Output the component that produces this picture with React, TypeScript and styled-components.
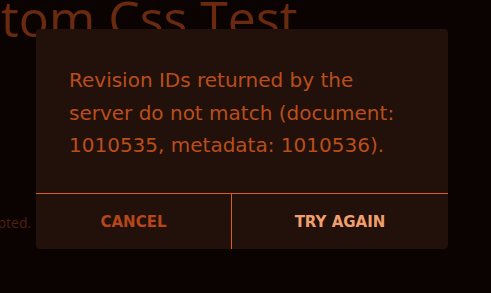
import React from "react";
import styled, { createGlobalStyle } from "styled-components";

const Global = createGlobalStyle`
  html, body { margin: 0; padding: 0; background: #0b0302; }
  body { width: 491px; height: 293px; overflow: hidden; }
  #root { height: 100%; }
`;

const Page = styled.main`
  position: relative;
  height: 293px;
  overflow: hidden;
  font-family: "Open Sans", "Noto Sans", sans-serif;
`;

const Title = styled.h1`
  margin: -12px 0 0 -85px;
  font-family: "Open Sans", sans-serif;
  font-weight: 400;
  font-size: 50px;
  line-height: 60px;
  color: #6a2a0f;
  white-space: nowrap;
`;

const Note = styled.p`
  margin: 165px 0 0 -127px;
  font-size: 14px;
  color: #4f200d;
  white-space: nowrap;
`;

const Dialog = styled.div`
  position: absolute;
  left: 36px;
  top: 29px;
  width: 412px;
  height: 220px;
  background: #22100a;
  border-radius: 4px;
  display: flex;
  flex-direction: column;
  font-family: "DejaVu Sans", "Noto Sans", sans-serif;
`;

const Message = styled.p`
  flex: 1;
  margin: 0;
  padding: 35px 33px 0 33px;
  font-size: 20px;
  line-height: 32.5px;
  color: #b94e1c;
`;

const Actions = styled.div`
  display: grid;
  grid-template-columns: 195px 1fr;
  height: 55px;
  border-top: 1px solid #d9601f;
`;

const ActionButton = styled.button<{ $primary?: boolean }>`
  border: none;
  background: transparent;
  font-family: "DejaVu Sans", "Noto Sans", sans-serif;
  font-weight: 700;
  font-size: 15px;
  color: ${(p) => (p.$primary ? "#ef9f6d" : "#b5471a")};
  border-left: ${(p) => (p.$primary ? "1px solid #d9601f" : "none")};
  padding: 0;
  cursor: pointer;
`;

export default function App() {
  return (
    <Page>
      <Global />
      <Title>Custom Css Test</Title>
      <Note>Changes were accepted.</Note>
      <Dialog role="dialog">
        <Message>
          Revision IDs returned by the server do not match (document: 1010535, metadata: 1010536).
        </Message>
        <Actions>
          <ActionButton>CANCEL</ActionButton>
          <ActionButton $primary>TRY AGAIN</ActionButton>
        </Actions>
      </Dialog>
    </Page>
  );
}
